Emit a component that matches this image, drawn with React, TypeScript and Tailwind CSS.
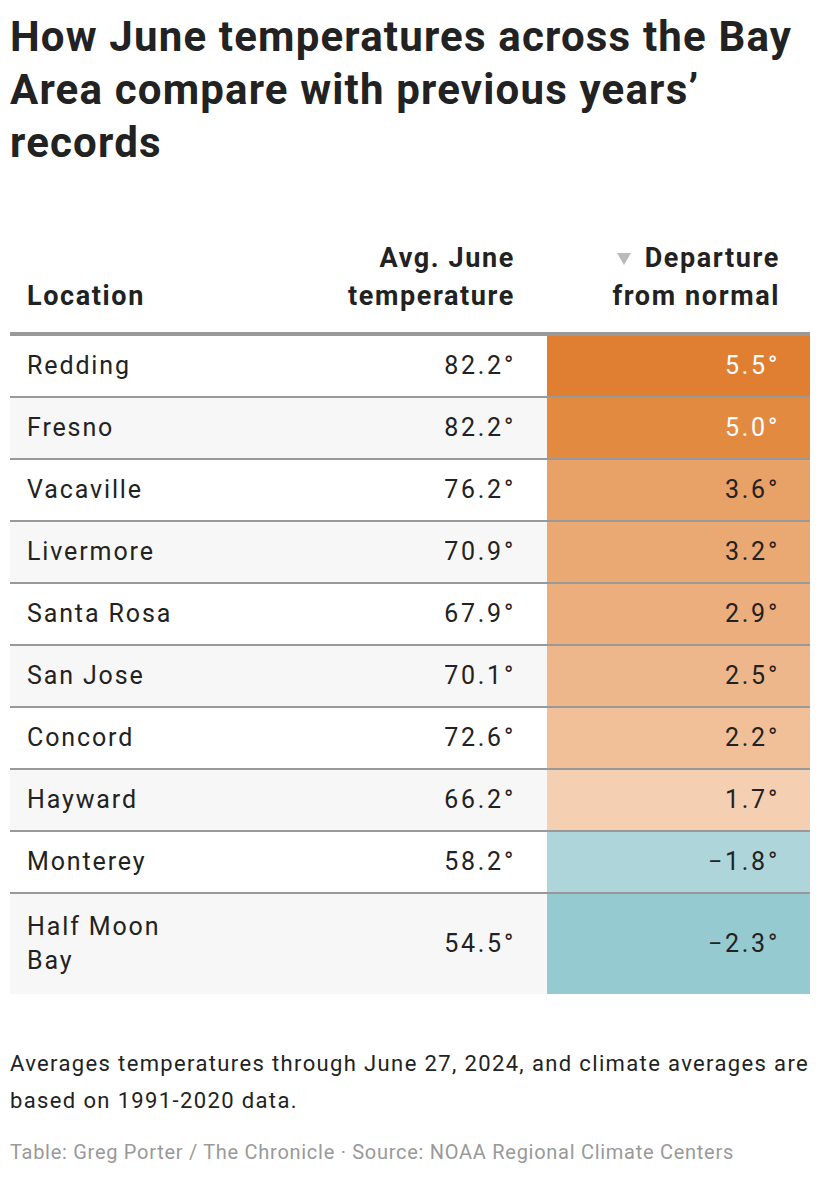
const rows = [
  { name: "Redding", avg: "82.2°", dep: "5.5°", bg: "bg-[#e07f32]", light: true },
  { name: "Fresno", avg: "82.2°", dep: "5.0°", bg: "bg-[#e28a40]", light: true },
  { name: "Vacaville", avg: "76.2°", dep: "3.6°", bg: "bg-[#e8a166]", light: false },
  { name: "Livermore", avg: "70.9°", dep: "3.2°", bg: "bg-[#eaa873]", light: false },
  { name: "Santa Rosa", avg: "67.9°", dep: "2.9°", bg: "bg-[#ebae7c]", light: false },
  { name: "San Jose", avg: "70.1°", dep: "2.5°", bg: "bg-[#eeb78b]", light: false },
  { name: "Concord", avg: "72.6°", dep: "2.2°", bg: "bg-[#f1c098]", light: false },
  { name: "Hayward", avg: "66.2°", dep: "1.7°", bg: "bg-[#f5cfb1]", light: false },
  { name: "Monterey", avg: "58.2°", dep: "−1.8°", bg: "bg-[#aed6da]", light: false },
  { name: "Half Moon Bay", avg: "54.5°", dep: "−2.3°", bg: "bg-[#95cad0]", light: false },
];

export default function App() {
  return (
    <div className="min-h-[1180px] bg-white px-[10px] text-[#222] font-['Roboto',sans-serif]">
      <h1 className="pt-[10px] text-[42px] font-bold leading-[53px] tracking-[0.028em]">
        How June temperatures across the Bay Area compare with previous years’ records
      </h1>

      <table className="mt-[70px] w-full border-collapse">
        <thead>
          <tr className="border-b-4 border-[#999] text-[27px] font-bold leading-[38px] tracking-[0.06em]">
            <th className="w-[180px] pb-[17px] pl-[17px] text-left align-bottom">Location</th>
            <th className="pb-[17px] pr-[32px] text-right align-bottom">
              Avg. June
              <br />
              temperature
            </th>
            <th className="w-[263px] pb-[17px] pr-[30px] text-right align-bottom">
              <svg viewBox="0 0 14 12" className="mr-[14px] inline-block h-[12px] w-[14px] align-[2px]">
                <path d="M0 0H14L7 12Z" fill="#bbb" />
              </svg>
              Departure
              <br />
              from normal
            </th>
          </tr>
        </thead>
        <tbody>
          {rows.map((r, i) => (
            <tr
              key={r.name}
              className={
                (i % 2 === 1 ? "bg-[#f7f7f7] " : "bg-white ") +
                (i < rows.length - 1 ? "border-b-2 border-[#999]" : "")
              }
            >
              <td
                className={
                  "pl-[17px] text-[25px] leading-[34px] tracking-[0.075em] " +
                  (i === rows.length - 1 ? "py-[16px]" : "py-[13px]")
                }
              >
                {r.name}
              </td>
              <td className="pr-[31px] text-right text-[25px] leading-[34px] tracking-[0.11em] tabular-nums">
                {r.avg}
              </td>
              <td
                className={
                  r.bg +
                  " pr-[30px] text-right text-[25px] leading-[34px] tracking-[0.11em] tabular-nums " +
                  (r.light ? "text-white" : "text-[#222]")
                }
              >
                {r.dep}
              </td>
            </tr>
          ))}
        </tbody>
      </table>

      <p className="mt-[51px] text-[22px] leading-[37px] tracking-[0.062em]">
        Averages temperatures through June 27, 2024, and climate averages are based on 1991-2020 data.
      </p>
      <p className="mt-[18px] text-[20px] leading-[30px] tracking-[0.036em] text-[#999]">
        Table: Greg Porter / The Chronicle · Source: NOAA Regional Climate Centers
      </p>
    </div>
  );
}
